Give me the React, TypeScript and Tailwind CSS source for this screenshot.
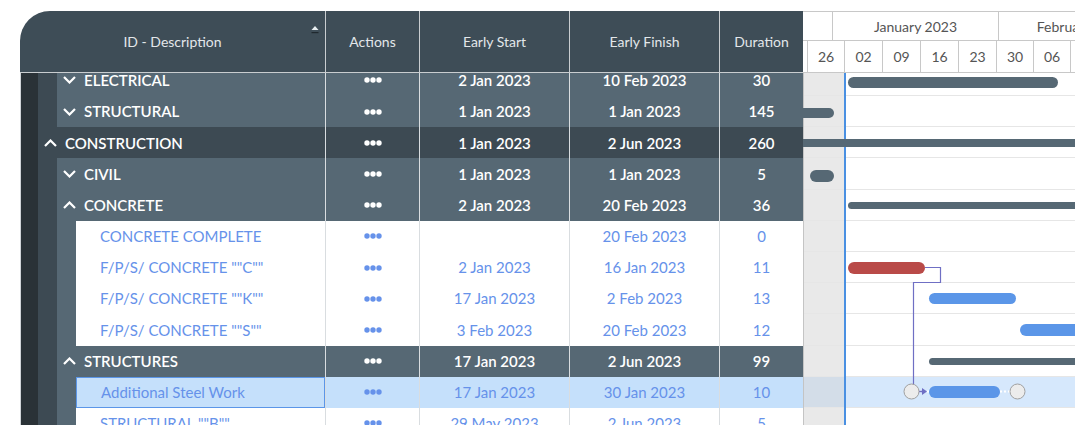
import React from 'react'

type Row = {
  name: string
  level: 0 | 1 | 2
  open?: boolean
  start: string
  finish: string
  dur: string
  selected?: boolean
}

const rows: Row[] = [
  { name: 'ELECTRICAL', level: 1, open: false, start: '2 Jan 2023', finish: '10 Feb 2023', dur: '30' },
  { name: 'STRUCTURAL', level: 1, open: false, start: '1 Jan 2023', finish: '1 Jan 2023', dur: '145' },
  { name: 'CONSTRUCTION', level: 0, open: true, start: '1 Jan 2023', finish: '2 Jun 2023', dur: '260' },
  { name: 'CIVIL', level: 1, open: false, start: '1 Jan 2023', finish: '1 Jan 2023', dur: '5' },
  { name: 'CONCRETE', level: 1, open: true, start: '2 Jan 2023', finish: '20 Feb 2023', dur: '36' },
  { name: 'CONCRETE COMPLETE', level: 2, start: '', finish: '20 Feb 2023', dur: '0' },
  { name: 'F/P/S/ CONCRETE ""C""', level: 2, start: '2 Jan 2023', finish: '16 Jan 2023', dur: '11' },
  { name: 'F/P/S/ CONCRETE ""K""', level: 2, start: '17 Jan 2023', finish: '2 Feb 2023', dur: '13' },
  { name: 'F/P/S/ CONCRETE ""S""', level: 2, start: '3 Feb 2023', finish: '20 Feb 2023', dur: '12' },
  { name: 'STRUCTURES', level: 1, open: true, start: '17 Jan 2023', finish: '2 Jun 2023', dur: '99' },
  { name: 'Additional Steel Work', level: 2, start: '17 Jan 2023', finish: '30 Jan 2023', dur: '10', selected: true },
  { name: 'STRUCTURAL ""B""', level: 2, start: '29 May 2023', finish: '2 Jun 2023', dur: '5' },
]

const weeks = [
  { label: '26', w: 'w-[37px]' },
  { label: '02', w: 'w-[38px]' },
  { label: '09', w: 'w-[38px]' },
  { label: '16', w: 'w-[38px]' },
  { label: '23', w: 'w-[38px]' },
  { label: '30', w: 'w-[37px]' },
  { label: '06', w: 'w-[37px]' },
  { label: '13', w: 'w-[38px]' },
]

function Chevron({ open }: { open?: boolean }) {
  return (
    <svg width="13" height="8" viewBox="0 0 13 8" className="shrink-0">
      <polyline
        points={open ? '1,7 6.5,1.5 12,7' : '1,1 6.5,6.5 12,1'}
        fill="none"
        stroke="white"
        strokeWidth="2.2"
      />
    </svg>
  )
}

function Dots({ color }: { color: string }) {
  return (
    <svg width="18" height="6" viewBox="0 0 18 6">
      <circle cx="3" cy="3" r="2.7" fill={color} />
      <circle cx="9" cy="3" r="2.7" fill={color} />
      <circle cx="15" cy="3" r="2.7" fill={color} />
    </svg>
  )
}

function TableRow({ row }: { row: Row }) {
  const bg =
    row.level === 0
      ? 'bg-[#3d4a53]'
      : row.level === 1
        ? 'bg-[#566874]'
        : row.selected
          ? 'bg-[#c5e0fb]'
          : 'bg-white'
  const text =
    row.level === 2 ? 'text-[#6692ea] font-normal' : 'text-white font-semibold'
  const dot = row.level === 2 ? '#6692ea' : '#ffffff'

  return (
    <div className={`flex h-[31.2px] shrink-0 text-[15px] ${text}`}>
      <div className="flex w-[306px] shrink-0 border-r border-[#d9dde0]">
        <div className="w-[18px] shrink-0 bg-[#2a3237]" />
        {row.level >= 1 && <div className="w-[19px] shrink-0 bg-[#3d4a53]" />}
        {row.level >= 2 && <div className="w-[19px] shrink-0 bg-[#566874]" />}
        {row.level < 2 ? (
          <div className={`flex flex-1 items-center gap-2 pl-[6px] ${bg}`}>
            <Chevron open={row.open} />
            <span className="whitespace-nowrap">{row.name}</span>
          </div>
        ) : (
          <div
            className={`flex flex-1 items-center pl-[24px] ${bg} ${
              row.selected ? 'border border-[#5b96e8]' : ''
            }`}
          >
            <span className="whitespace-nowrap">{row.name}</span>
          </div>
        )}
      </div>
      <div className={`flex w-[94px] shrink-0 items-center justify-center border-r border-[#d9dde0] ${bg}`}>
        <Dots color={dot} />
      </div>
      <div className={`flex w-[150px] shrink-0 items-center justify-center border-r border-[#d9dde0] ${bg}`}>
        {row.start}
      </div>
      <div className={`flex w-[150px] shrink-0 items-center justify-center border-r border-[#d9dde0] ${bg}`}>
        {row.finish}
      </div>
      <div className={`flex w-[83px] shrink-0 items-center justify-center ${bg}`}>{row.dur}</div>
    </div>
  )
}

function GanttChart() {
  return (
    <svg width="272" height="352" className="absolute left-0 top-0">
      <line x1="0.5" y1="0" x2="0.5" y2="352" stroke="#c4c4c4" />
      <rect x="41" y="0" width="2" height="352" fill="#4a90e2" />
      <rect x="45" y="4" width="210" height="11" rx="5.5" fill="#566874" />
      <rect x="-12" y="35" width="43" height="10" rx="5" fill="#566874" />
      <rect x="0" y="66" width="272" height="8" fill="#566874" />
      <rect x="7" y="97" width="24" height="12" rx="6" fill="#566874" />
      <rect x="45" y="129" width="260" height="7" rx="3.5" fill="#566874" />
      <rect x="45" y="189" width="77" height="12" rx="6" fill="#b94a48" />
      <path d="M122 194.5 H137.5 V209.5 H110.5 V318.5" fill="none" stroke="#6f6fc4" strokeWidth="1.2" />
      <rect x="126" y="220" width="87" height="11" rx="5.5" fill="#5b96e8" />
      <rect x="217" y="251" width="70" height="12" rx="6" fill="#5b96e8" />
      <rect x="126" y="285" width="160" height="7" rx="3.5" fill="#566874" />
      <line x1="116" y1="318.5" x2="126" y2="318.5" stroke="white" strokeWidth="2" strokeDasharray="2 2" />
      <line x1="197" y1="318.5" x2="207" y2="318.5" stroke="white" strokeWidth="2" strokeDasharray="2 2" />
      <rect x="126" y="313" width="71" height="12" rx="6" fill="#5b96e8" />
      <line x1="113" y1="318.5" x2="120" y2="318.5" stroke="#6f6fc4" strokeWidth="1.5" />
      <polygon points="119,315 124,318.5 119,322" fill="#6f6fc4" />
      <circle cx="108.5" cy="318.5" r="7.5" fill="#ececec" stroke="#a0a0a0" />
      <circle cx="214.5" cy="318.5" r="7.5" fill="#ececec" stroke="#a0a0a0" />
    </svg>
  )
}

export default function App() {
  return (
    <div className="h-[425px] w-[1075px] overflow-hidden bg-white pl-5 pt-[11px] font-['Lato',sans-serif]">
      <div className="flex h-[414px] w-[1055px]">
        {/* grid */}
        <div className="flex w-[783px] shrink-0 flex-col">
          <div className="flex h-[62px] shrink-0 overflow-hidden rounded-tl-[30px] border-b border-[#c9cdd0] bg-[#3e4d57] text-[14px] text-[#e3e7ea]">
            <div className="relative flex w-[306px] shrink-0 items-center justify-center border-r border-[#c9cdd0]">
              ID - Description
              <svg width="10" height="10" viewBox="0 0 10 10" className="absolute right-[5px] top-[13px]">
                <polygon points="1.5,6 5,2 8.5,6" fill="#e8eef0" />
                <rect x="1.5" y="8" width="7" height="1.2" fill="#1f282e" />
              </svg>
            </div>
            <div className="flex w-[94px] shrink-0 items-center justify-center border-r border-[#c9cdd0]">Actions</div>
            <div className="flex w-[150px] shrink-0 items-center justify-center border-r border-[#c9cdd0]">Early Start</div>
            <div className="flex w-[150px] shrink-0 items-center justify-center border-r border-[#c9cdd0]">Early Finish</div>
            <div className="flex w-[83px] shrink-0 items-center justify-center">Duration</div>
          </div>
          <div className="flex-1 overflow-hidden border-l border-[#d0d4d7]">
            <div className="-ml-px -mt-[8.2px] flex flex-col">
              {rows.map((r) => (
                <TableRow key={r.name} row={r} />
              ))}
            </div>
          </div>
        </div>

        {/* gantt */}
        <div className="flex w-[272px] shrink-0 flex-col overflow-hidden">
          <div className="flex h-[30px] shrink-0 border-b border-t border-[#c8c8c8] text-[14px] text-[#555]">
            <div className="w-[30px] shrink-0 border-r border-[#c8c8c8]" />
            <div className="flex w-[166px] shrink-0 items-center justify-center border-r border-[#c8c8c8]">January 2023</div>
            <div className="flex w-[166px] shrink-0 items-center justify-center">February 2023</div>
          </div>
          <div className="flex h-[32px] shrink-0 border-b border-[#c8c8c8] text-[14px] text-[#555]">
            <div className="w-[5px] shrink-0 border-r border-[#c8c8c8]" />
            {weeks.map((w) => (
              <div key={w.label} className={`flex ${w.w} shrink-0 items-center justify-center border-r border-[#c8c8c8]`}>
                {w.label}
              </div>
            ))}
          </div>
          <div className="relative flex-1 overflow-hidden">
            <div className="-mt-[8.2px] flex flex-col">
              {rows.map((r) => (
                <div
                  key={r.name}
                  className={`flex h-[31.2px] shrink-0 border-b border-[#e6e6e6] ${r.selected ? 'bg-[#d6e8fc]' : 'bg-white'}`}
                >
                  <div className={`w-[42px] shrink-0 ${r.selected ? 'bg-[#d3dde8]' : 'bg-[#e9e9e9]'}`} />
                  <div className="flex-1" />
                </div>
              ))}
            </div>
            <GanttChart />
          </div>
        </div>
      </div>
    </div>
  )
}
